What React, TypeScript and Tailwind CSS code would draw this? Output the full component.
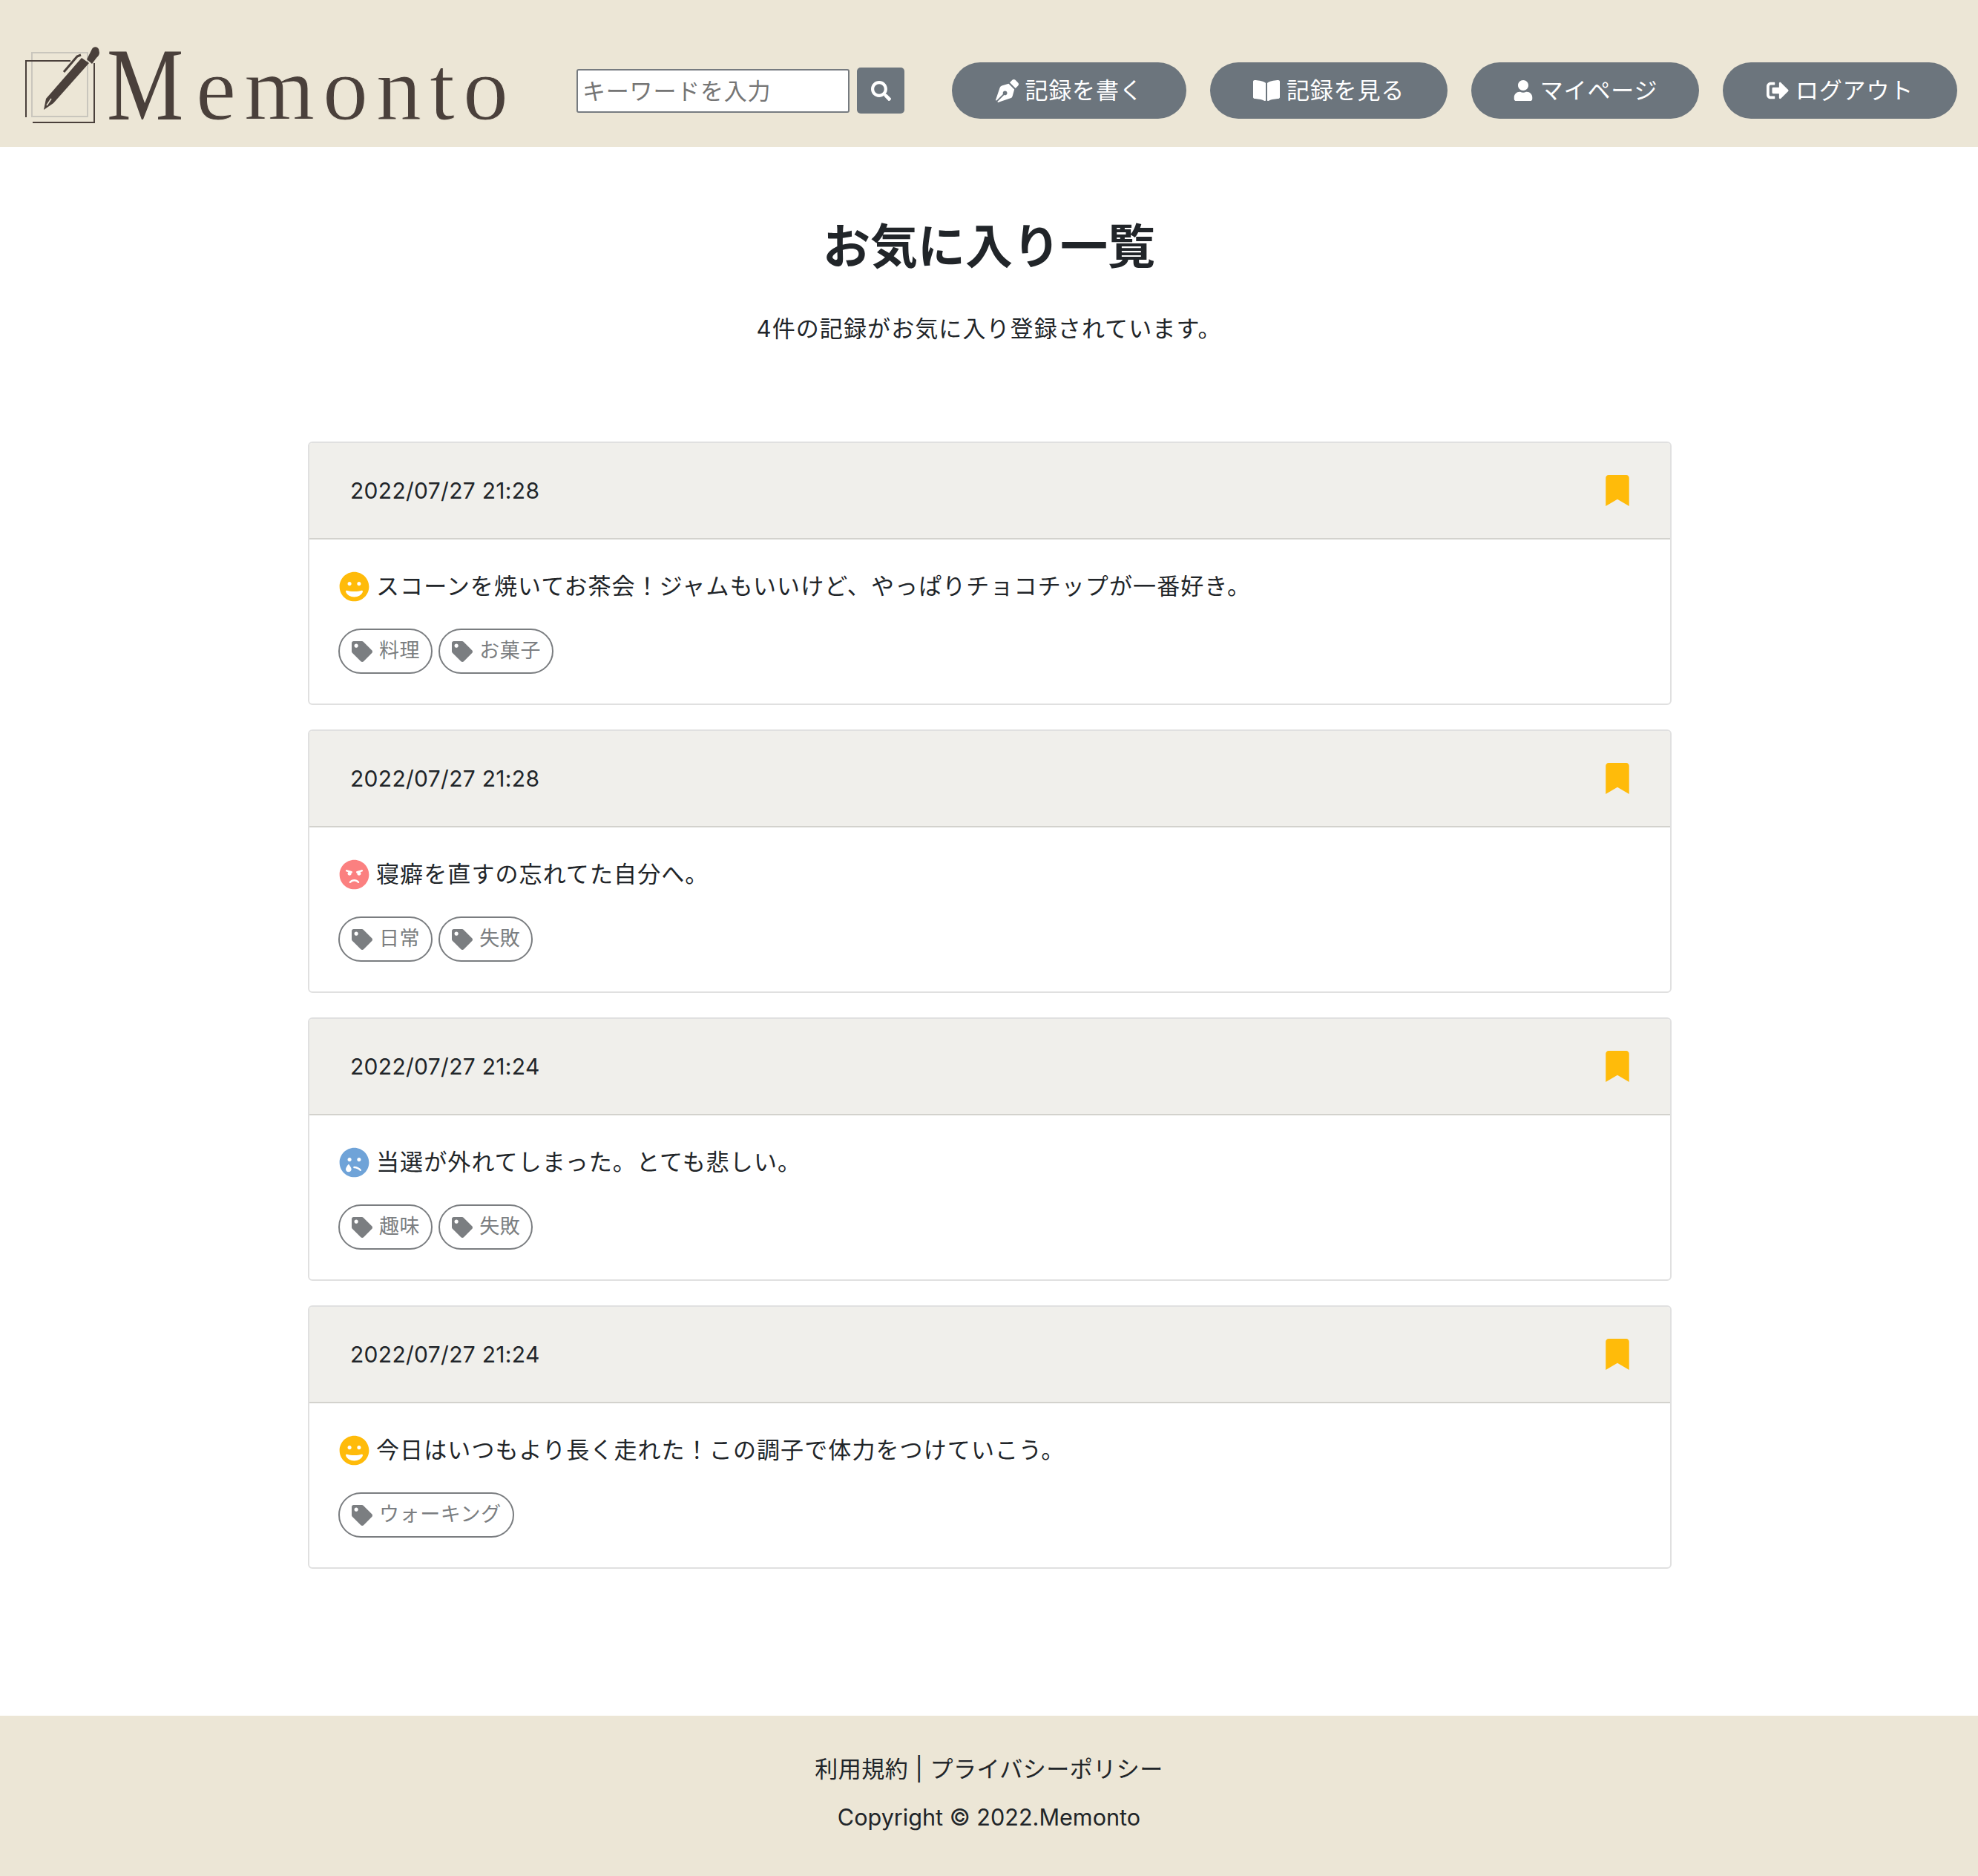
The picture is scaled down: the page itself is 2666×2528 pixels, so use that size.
import React from 'react'
import { FaAngry, FaBookmark, FaBookOpen, FaGrin, FaPenNib, FaSadTear, FaSearch, FaSignOutAlt, FaTag, FaUser } from 'react-icons/fa'

type Entry = { date: string; mood: 'happy' | 'angry' | 'sad'; text: string; tags: string[] }

const entries: Entry[] = [
  { date: '2022/07/27 21:28', mood: 'happy', text: 'スコーンを焼いてお茶会！ジャムもいいけど、やっぱりチョコチップが一番好き。', tags: ['料理', 'お菓子'] },
  { date: '2022/07/27 21:28', mood: 'angry', text: '寝癖を直すの忘れてた自分へ。', tags: ['日常', '失敗'] },
  { date: '2022/07/27 21:24', mood: 'sad', text: '当選が外れてしまった。とても悲しい。', tags: ['趣味', '失敗'] },
  { date: '2022/07/27 21:24', mood: 'happy', text: '今日はいつもより長く走れた！この調子で体力をつけていこう。', tags: ['ウォーキング'] },
]

const Logo = () => (
  <div className="flex items-end h-[110px] ml-[32px] w-[700px] text-[#4a403b] font-['Liberation_Serif',serif]">
    <svg width="108" height="110" viewBox="0 0 108 110" className="shrink-0 mb-[4px]">
      <path d="M11 10H86V96H11Z" fill="none" stroke="#c9c6bd" strokeWidth="2" />
      <path d="M63 21H3V97" fill="none" stroke="#4a403b" strokeWidth="2" />
      <path d="M12 104H95V24" fill="none" stroke="#4a403b" strokeWidth="2" />
      <path d="M27 87L30 72L78 17L88 24L40 78Z" fill="#4a403b" />
      <path d="M85 19L92 5C94 2 98 1 101 5L102 10C102 13 100 15 98 17L92 25Z" fill="#4a403b" />
      <path d="M54 36L72 15L77 13" fill="none" stroke="#4a403b" strokeWidth="3" />
      <path d="M31 81L37 72" stroke="#ece6d6" strokeWidth="1.5" />
    </svg>
    <div className="flex items-baseline">
      <span className="inline-block w-[104px] ml-[4px] text-[140px] leading-[110px] origin-left scale-x-[0.83]">M</span>
      <span className="ml-[16px] text-[122px] leading-[110px] tracking-[11px] [-webkit-text-stroke:1px_#ece6d6]">emonto</span>
    </div>
  </div>
)

const NavButton = ({ icon, label, width }: { icon: React.ReactNode; label: string; width: string }) => (
  <a className={`${width} h-[76px] rounded-full bg-[#6c757d] text-white flex items-center justify-center gap-[9px] tracking-[0.8px] shrink-0`}>
    {icon}
    <span>{label}</span>
  </a>
)

const Face = ({ mood }: { mood: Entry['mood'] }) => {
  if (mood === 'happy') return <FaGrin size={41} className="text-[#ffbb0a] shrink-0 ml-[1px]" />
  if (mood === 'angry') return <FaAngry size={41} className="text-[#fb8080] shrink-0 ml-[1px]" />
  return <FaSadTear size={41} className="text-[#6fa3d8] shrink-0 ml-[1px]" />
}

const Card = ({ entry }: { entry: Entry }) => (
  <div className="h-[355px] border-2 border-[#e0e0e0] rounded-[6px] overflow-hidden flex flex-col">
    <div className="h-[130px] bg-[#f0efeb] border-b-2 border-[#d3d2cd] flex items-center justify-between pl-[55px] pr-[50px] shrink-0">
      <span className="text-[30px] tracking-[0.3px]">{entry.date}</span>
      <FaBookmark size={42} className="text-[#ffbb0a]" />
    </div>
    <div className="pl-[39px] pt-[42px]">
      <div className="flex items-center gap-[9px] h-[42px] tracking-[1.1px]">
        <Face mood={entry.mood} />
        <span>{entry.text}</span>
      </div>
      <div className="flex gap-[8px] mt-[36px]">
        {entry.tags.map((tag) => (
          <span key={tag} className="h-[61px] border-2 border-[#7a7d80] rounded-full pl-[16px] pr-[15px] flex items-center gap-[9px] text-[#7b7e81] text-[27px] tracking-[0.6px]">
            <FaTag size={28} />
            <span>{tag}</span>
          </span>
        ))}
      </div>
    </div>
  </div>
)

export default function App() {
  return (
    <div className="min-h-screen flex flex-col bg-white text-[#212529] text-[31px] font-['Inter','Noto_Sans_CJK_JP',sans-serif]">
      <header className="h-[198px] bg-[#ece6d6] flex items-end pb-[38px] shrink-0">
        <div className="flex items-center mb-[-15px] w-[777px] shrink-0 self-end">
          <Logo />
        </div>
        <div className="flex items-center h-[76px]">
          <input
            placeholder="キーワードを入力"
            className="w-[368px] h-[59px] bg-white border-2 border-[#767b80] rounded-[3px] px-[6px] tracking-[0.8px] placeholder:text-[#757575] outline-none"
          />
          <button className="ml-[10px] w-[64px] h-[62px] bg-[#6c757d] rounded-[5px] flex items-center justify-center text-white">
            <FaSearch size={27} />
          </button>
        </div>
        <nav className="ml-[64px] flex items-center gap-[32px]">
          <NavButton width="w-[316px]" icon={<FaPenNib size={31} />} label="記録を書く" />
          <NavButton width="w-[320px]" icon={<FaBookOpen size={36} />} label="記録を見る" />
          <NavButton width="w-[307px]" icon={<FaUser size={28} />} label="マイページ" />
          <NavButton width="w-[316px]" icon={<FaSignOutAlt size={30} />} label="ログアウト" />
        </nav>
      </header>

      <main className="flex-1 flex flex-col items-center">
        <h1 className="mt-[98px] text-[64px] leading-[72px] font-bold">お気に入り一覧</h1>
        <p className="mt-[55px] leading-[40px] tracking-[1.1px]">4件の記録がお気に入り登録されています。</p>
        <div className="mt-[132px] ml-[2px] w-[1838px] flex flex-col gap-[33px]">
          {entries.map((entry, i) => (
            <Card key={i} entry={entry} />
          ))}
        </div>
      </main>

      <footer className="h-[216px] bg-[#ece6d6] shrink-0 flex flex-col items-center pt-[52px] gap-[25px] leading-[40px]">
        <p className="tracking-[0.5px]">利用規約 | プライバシーポリシー</p>
        <p className="text-[30.6px]">Copyright © 2022.Memonto</p>
      </footer>
    </div>
  )
}
